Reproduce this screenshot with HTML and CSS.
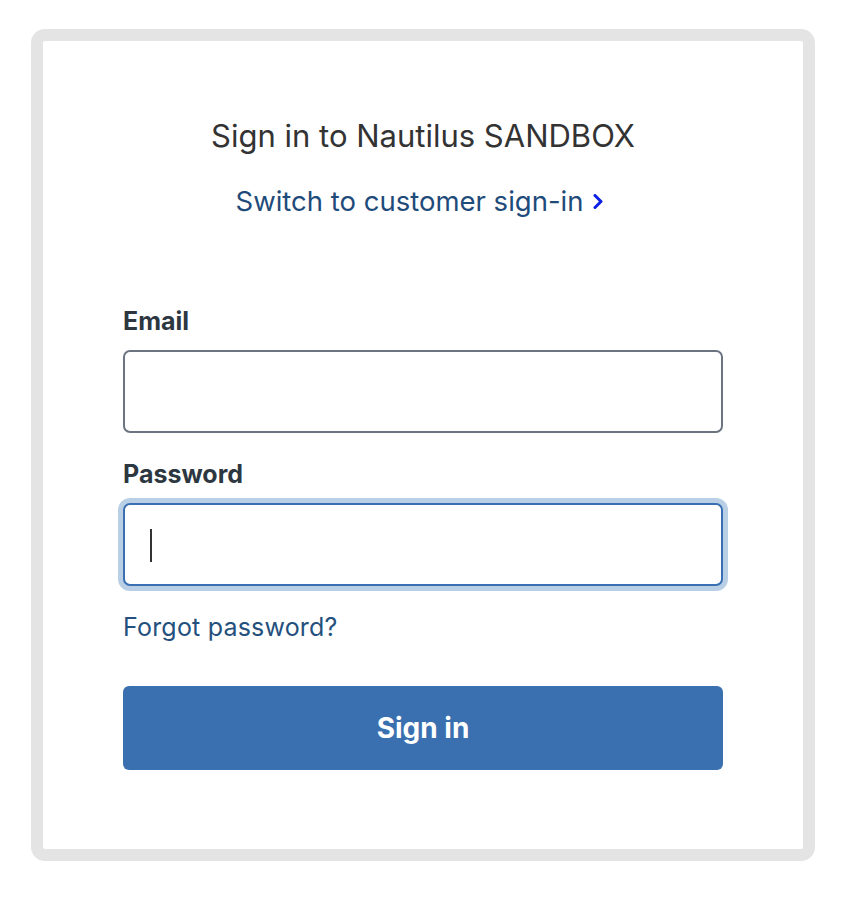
FILE: index.html
```html
<!DOCTYPE html>
<html lang="en">
<head>
<meta charset="utf-8">
<title>Sign in</title>
<link rel="stylesheet" href="styles.css">
</head>
<body>
<main class="page">
  <section class="card">
    <h1 class="title">Sign in to Nautilus SANDBOX</h1>
    <a class="switch" href="#">Switch to customer sign-in <svg class="chev" width="10" height="15" viewBox="0 0 10 15"><path d="M2 1.5 L8 7.5 L2 13.5" fill="none" stroke="#0b1fe6" stroke-width="3" stroke-linecap="round" stroke-linejoin="round"/></svg></a>
    <form class="form">
      <label class="label" for="email">Email</label>
      <div class="input"></div>
      <label class="label" for="pw">Password</label>
      <div class="input focus"><span class="caret"></span></div>
      <a class="forgot" href="#">Forgot password?</a>
      <div class="btn">Sign in</div>
    </form>
  </section>
</main>
</body>
</html>
```
FILE: styles.css
```css
html, body { margin: 0; padding: 0; background: #fff; }
body { font-family: Inter, "Liberation Sans", Arial, sans-serif; }
.page { padding-top: 29px; }
.card {
  width: 600px;
  margin: 0 auto;
  padding: 77px 80px 79px;
  border: 12px solid #e4e4e4;
  border-radius: 14px;
  background: #fff;
  display: flex;
  flex-direction: column;
  align-items: stretch;
}
.title {
  margin: 0;
  font-size: 31px;
  line-height: 36px;
  font-weight: 400;
  color: #333;
  text-align: center;
}
.switch {
  margin-top: 31px;
  margin-right: 7px;
  align-self: center;
  font-size: 27.5px;
  line-height: 32px;
  color: #1f4b7a;
  text-decoration: none;
  display: flex;
  align-items: center;
  gap: 10px;
}
.chev { display: block; }
.form { display: flex; flex-direction: column; margin-top: 89px; }
.label {
  font-size: 25px;
  line-height: 30px;
  font-weight: 700;
  color: #2d3741;
  margin-bottom: 14px;
}
.input {
  height: 79px;
  border: 2px solid #6b7480;
  border-radius: 7px;
  margin-bottom: 26px;
  position: relative;
  background: #fff;
}
.input.focus {
  border-color: #3a6fb3;
  box-shadow: 0 0 0 5px #b9cfe5;
}
.caret {
  position: absolute;
  left: 25px;
  top: 24px;
  width: 2px;
  height: 33px;
  background: #333;
}
.forgot {
  font-size: 25px;
  line-height: 30px;
  letter-spacing: 0.2px;
  color: #24507e;
  text-decoration: none;
  align-self: flex-start;
}
.btn {
  margin-top: 44px;
  height: 84px;
  border-radius: 6px;
  background: #3a70b0;
  color: #fff;
  font-size: 28px;
  font-weight: 700;
  display: flex;
  align-items: center;
  justify-content: center;
}
```
